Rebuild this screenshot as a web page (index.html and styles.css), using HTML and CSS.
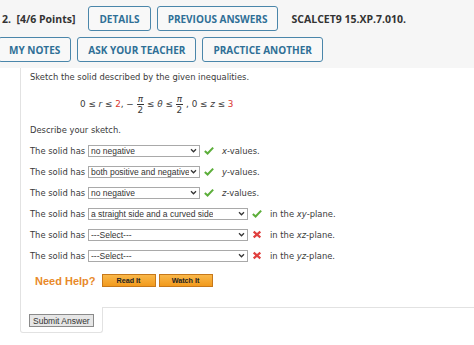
FILE: index.html
```html
<!DOCTYPE html>
<html>
<head>
<meta charset="utf-8">
<link rel="stylesheet" href="styles.css">
</head>
<body>
<div class="header">
  <div class="hrow">
    <span class="qnum">2.&nbsp; [4/6 Points]</span>
    <span class="hbtn">DETAILS</span>
    <span class="hbtn">PREVIOUS ANSWERS</span>
    <span class="code">SCALCET9 15.XP.7.010.</span>
  </div>
  <div class="hrow hrow2">
    <span class="hbtn">MY NOTES</span>
    <span class="hbtn">ASK YOUR TEACHER</span>
    <span class="hbtn">PRACTICE ANOTHER</span>
  </div>
</div>
<div class="qbox">
  <p class="intro">Sketch the solid described by the given inequalities.</p>
  <div class="formula">
    <span>0 ≤ <i>r</i> ≤ <span class="red">2</span>, −</span>
    <span class="frac"><span class="num"><i>π</i></span><span class="den">2</span></span>
    <span>≤ <i>θ</i> ≤</span>
    <span class="frac"><span class="num"><i>π</i></span><span class="den">2</span></span>
    <span>, 0 ≤ <i>z</i> ≤ <span class="red">3</span></span>
  </div>
  <p class="describe">Describe your sketch.</p>
  <div class="arow">
    <span class="lbl">The solid has</span>
    <span class="sel short"><span class="opt">no negative</span><svg class="chev" viewBox="0 0 8 6"><path d="M1 1.5 L4 4.5 L7 1.5" fill="none" stroke="#333" stroke-width="1.5"/></svg></span>
    <svg class="mark" viewBox="0 0 12 10"><path d="M1 5.5 L4.3 8.6 L11 1.6" fill="none" stroke="#5cae3a" stroke-width="2.4"/></svg>
    <span class="tail"><i>x</i>-values.</span>
  </div>
  <div class="arow">
    <span class="lbl">The solid has</span>
    <span class="sel short"><span class="opt">both positive and negative</span><svg class="chev" viewBox="0 0 8 6"><path d="M1 1.5 L4 4.5 L7 1.5" fill="none" stroke="#333" stroke-width="1.5"/></svg></span>
    <svg class="mark" viewBox="0 0 12 10"><path d="M1 5.5 L4.3 8.6 L11 1.6" fill="none" stroke="#5cae3a" stroke-width="2.4"/></svg>
    <span class="tail"><i>y</i>-values.</span>
  </div>
  <div class="arow">
    <span class="lbl">The solid has</span>
    <span class="sel short"><span class="opt">no negative</span><svg class="chev" viewBox="0 0 8 6"><path d="M1 1.5 L4 4.5 L7 1.5" fill="none" stroke="#333" stroke-width="1.5"/></svg></span>
    <svg class="mark" viewBox="0 0 12 10"><path d="M1 5.5 L4.3 8.6 L11 1.6" fill="none" stroke="#5cae3a" stroke-width="2.4"/></svg>
    <span class="tail"><i>z</i>-values.</span>
  </div>
  <div class="arow">
    <span class="lbl">The solid has</span>
    <span class="sel long"><span class="opt">a straight side and a curved side</span><svg class="chev" viewBox="0 0 8 6"><path d="M1 1.5 L4 4.5 L7 1.5" fill="none" stroke="#333" stroke-width="1.5"/></svg></span>
    <svg class="mark" viewBox="0 0 12 10"><path d="M1 5.5 L4.3 8.6 L11 1.6" fill="none" stroke="#5cae3a" stroke-width="2.4"/></svg>
    <span class="tail">in the <i>xy</i>-plane.</span>
  </div>
  <div class="arow">
    <span class="lbl">The solid has</span>
    <span class="sel long"><span class="opt">---Select---</span><svg class="chev" viewBox="0 0 8 6"><path d="M1 1.5 L4 4.5 L7 1.5" fill="none" stroke="#333" stroke-width="1.5"/></svg></span>
    <svg class="mark" viewBox="0 0 12 10"><path d="M2 1.5 L10 8.5 M10 1.5 L2 8.5" fill="none" stroke="#e0403f" stroke-width="2.6"/></svg>
    <span class="tail">in the <i>xz</i>-plane.</span>
  </div>
  <div class="arow">
    <span class="lbl">The solid has</span>
    <span class="sel long"><span class="opt">---Select---</span><svg class="chev" viewBox="0 0 8 6"><path d="M1 1.5 L4 4.5 L7 1.5" fill="none" stroke="#333" stroke-width="1.5"/></svg></span>
    <svg class="mark" viewBox="0 0 12 10"><path d="M2 1.5 L10 8.5 M10 1.5 L2 8.5" fill="none" stroke="#e0403f" stroke-width="2.6"/></svg>
    <span class="tail">in the <i>yz</i>-plane.</span>
  </div>
  <div class="help">
    <span class="needhelp">Need Help?</span>
    <span class="obtn">Read It</span>
    <span class="obtn">Watch It</span>
  </div>
</div>
<div class="submit-tab">
  <span class="submit">Submit Answer</span>
</div>
</body>
</html>
```

FILE: styles.css
```css
html, body {
  margin: 0;
  padding: 0;
  background: #ffffff;
}
body {
  width: 474px;
  height: 345px;
  overflow: hidden;
  font-family: "DejaVu Sans", Verdana, sans-serif;
  color: #3a3a3a;
}
.header {
  background: #f6f6f6;
  height: 68px;
  padding-top: 6px;
  box-sizing: border-box;
  font-family: "Open Sans", sans-serif;
  font-weight: 700;
  font-size: 10px;
}
.hrow {
  display: flex;
  align-items: center;
  gap: 6px;
  height: 25px;
}
.hrow2 {
  margin-top: 6px;
  margin-left: -2px;
}
.qnum {
  margin-left: 2px;
  margin-right: 7px;
  color: #333333;
  font-size: 10.5px;
}
.code {
  margin-left: 7px;
  color: #333333;
  font-size: 10.5px;
}
.hbtn {
  display: flex;
  align-items: center;
  height: 25px;
  box-sizing: border-box;
  padding: 0 10px;
  border: 1.5px solid #4a86aa;
  border-radius: 3px;
  color: #2f6f96;
  background: #f8f8f8;
}
.qbox {
  margin-left: 20px;
  border-left: 1px solid #e2e2e2;
  border-bottom: 1px solid #e2e2e2;
  padding-left: 9px;
  height: 240px;
  box-sizing: border-box;
  font-size: 8.4px;
}
.intro {
  margin: 0;
  padding-top: 4px;
  line-height: 10px;
}
.formula {
  display: flex;
  align-items: center;
  gap: 3px;
  margin-top: 8px;
  margin-left: 50px;
  height: 28px;
  font-size: 8.8px;
}
.frac {
  display: inline-flex;
  flex-direction: column;
  align-items: center;
  line-height: 10px;
}
.num {
  border-bottom: 1px solid #333;
  padding: 0 1px;
}
.red {
  color: #d9362f;
}
.describe {
  margin: 0;
  margin-top: 7px;
  line-height: 10px;
}
.arow {
  display: flex;
  align-items: center;
  height: 21px;
}
.describe + .arow {
  margin-top: 5px;
}
.lbl {
  width: 58px;
}
.sel {
  display: flex;
  align-items: center;
  justify-content: space-between;
  height: 12px;
  box-sizing: border-box;
  border: 1px solid #a9a9a9;
  background: #fff;
  padding: 0 2px 0 2px;
  font-family: "Liberation Sans", Arial, sans-serif;
  font-size: 8.5px;
  color: #333;
  overflow: hidden;
}
.opt {
  white-space: nowrap;
  overflow: hidden;
}
.short { width: 112px; }
.long { width: 160px; }
.chev {
  width: 7px;
  height: 5px;
  flex: none;
  margin-left: 1px;
}
.mark {
  width: 10px;
  height: 9px;
  margin-left: 4px;
}
.tail { margin-left: 8px; }
.help {
  display: flex;
  align-items: center;
  gap: 3px;
  margin-top: 8px;
  margin-left: 5px;
}
.needhelp {
  font-family: "Liberation Sans", Arial, sans-serif;
  font-weight: 700;
  font-size: 11px;
  color: #e8892a;
  margin-right: 3px;
}
.obtn {
  display: flex;
  align-items: center;
  justify-content: center;
  width: 54px;
  height: 13px;
  box-sizing: border-box;
  border: 1px solid #c7781a;
  background: linear-gradient(#f9b84a, #f29a1d);
  font-family: "Liberation Sans", Arial, sans-serif;
  font-weight: 700;
  font-size: 7.2px;
  color: #222;
}
.submit-tab {
  display: flex;
  align-items: flex-start;
  margin-left: 20px;
  margin-top: -1px;
  width: 83px;
  height: 26px;
  box-sizing: border-box;
  border: 1px solid #e2e2e2;
  border-top: none;
  border-radius: 0 0 3px 3px;
  background: #fff;
  padding: 7px 0 0 8px;
}
.submit {
  display: flex;
  align-items: center;
  height: 13px;
  box-sizing: border-box;
  padding: 0 3px;
  border: 1px solid #8a8a8a;
  background: #e6e6e6;
  font-family: "Liberation Sans", Arial, sans-serif;
  font-size: 8.5px;
  color: #333;
}
```
